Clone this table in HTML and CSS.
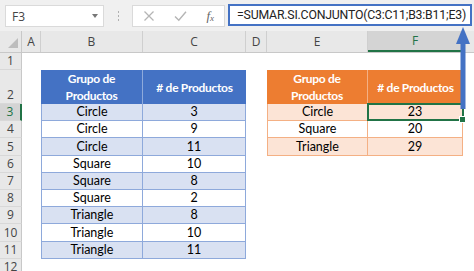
FILE: index.html
```html
<!DOCTYPE html>
<html>
<head>
<meta charset="utf-8">
<link rel="stylesheet" href="styles.css">
</head>
<body>
<div class="app">
  <div class="fbar">
    <div class="namebox"><span>F3</span><span class="caret"></span></div>
    <div class="grip"><i></i><i></i><i></i></div>
    <div class="btns">
      <svg width="12" height="12" viewBox="0 0 12 12"><path d="M1.5 1.5 L10.5 10.5 M10.5 1.5 L1.5 10.5" stroke="#b5b5b5" stroke-width="1.3" fill="none"/></svg>
      <svg width="13" height="12" viewBox="0 0 13 12"><path d="M1 6.5 L4.8 10.2 L12 1.8" stroke="#b5b5b5" stroke-width="1.4" fill="none"/></svg>
      <span class="fx">f<sub>x</sub></span>
    </div>
    <div class="formula">=SUMAR.SI.CONJUNTO(C3:C11;B3:B11;E3)</div>
  </div>
  <div class="sheet">
    <div class="row hdr">
      <div class="corner"><span class="tri"></span></div>
      <div class="ch">A</div><div class="ch">B</div><div class="ch">C</div><div class="ch">D</div><div class="ch">E</div><div class="ch sel">F</div><div class="ch last"></div>
    </div>
    <div class="row r1">
      <div class="rh">1</div><div></div><div></div><div></div><div></div><div></div><div></div><div></div>
    </div>
    <div class="row r2">
      <div class="rh">2</div><div></div>
      <div class="bh b">Grupo de<br>Productos</div><div class="bh c"># de Productos</div>
      <div></div>
      <div class="oh e">Grupo de<br>Productos</div><div class="oh f"># de Productos</div><div></div>
    </div>
    <div class="row">
      <div class="rh selr">3</div><div></div>
      <div class="bb b alt">Circle</div><div class="bb c alt">3</div><div></div>
      <div class="ob e alt">Circle</div><div class="ob f alt active">23</div><div></div>
    </div>
    <div class="row">
      <div class="rh">4</div><div></div>
      <div class="bb b">Circle</div><div class="bb c">9</div><div></div>
      <div class="ob e">Square</div><div class="ob f">20</div><div></div>
    </div>
    <div class="row h18">
      <div class="rh">5</div><div></div>
      <div class="bb b alt">Circle</div><div class="bb c alt">11</div><div></div>
      <div class="ob e alt">Triangle</div><div class="ob f alt">29</div><div></div>
    </div>
    <div class="row">
      <div class="rh">6</div><div></div>
      <div class="bb b">Square</div><div class="bb c">10</div><div></div><div></div><div></div><div></div>
    </div>
    <div class="row">
      <div class="rh">7</div><div></div>
      <div class="bb b alt">Square</div><div class="bb c alt">8</div><div></div><div></div><div></div><div></div>
    </div>
    <div class="row">
      <div class="rh">8</div><div></div>
      <div class="bb b">Square</div><div class="bb c">2</div><div></div><div></div><div></div><div></div>
    </div>
    <div class="row">
      <div class="rh">9</div><div></div>
      <div class="bb b alt">Triangle</div><div class="bb c alt">8</div><div></div><div></div><div></div><div></div>
    </div>
    <div class="row h18">
      <div class="rh">10</div><div></div>
      <div class="bb b">Triangle</div><div class="bb c">10</div><div></div><div></div><div></div><div></div>
    </div>
    <div class="row">
      <div class="rh">11</div><div></div>
      <div class="bb b alt">Triangle</div><div class="bb c alt">11</div><div></div><div></div><div></div><div></div>
    </div>
    <div class="row">
      <div class="rh">12</div><div></div><div></div><div></div><div></div><div></div><div></div><div></div>
    </div>
  </div>
  <svg class="arrow" width="20" height="86" viewBox="0 0 20 86">
    <rect x="4.5" y="14" width="5" height="68" fill="#4472c4"/>
    <polygon points="7,0 0,17 14,17" fill="#4472c4"/>
  </svg>
</div>
</body>
</html>
```
FILE: styles.css
```css
* { box-sizing: border-box; margin: 0; padding: 0; }
body { margin: 0; width: 474px; height: 271px; overflow: hidden; background: #fff; font-family: "Open Sans", "Noto Sans", sans-serif; }
.app { position: relative; width: 474px; height: 271px; background: #fff; }

.fbar { height: 31px; background: #f0f0f0; display: flex; align-items: flex-start; padding: 4px 2px 0 5px; }
.namebox { margin-top: 1px; width: 99px; height: 22px; background: #fff; border: 1px solid #dadada; display: flex; align-items: center; justify-content: space-between; padding: 0 5px 0 6px; font-size: 12px; color: #444; }
.caret { width: 0; height: 0; border-left: 3px solid transparent; border-right: 3px solid transparent; border-top: 4px solid #777; }
.grip { width: 28px; height: 23px; display: flex; flex-direction: column; align-items: center; justify-content: center; gap: 2px; }
.grip i { display: block; width: 1px; height: 2px; background: #b0b0b0; }
.btns { margin-top: 1px; width: 93px; height: 22px; background: #fff; border: 1px solid #dadada; display: flex; align-items: center; justify-content: space-between; padding: 0 10px 0 10px; }
.fx { font-family: "Liberation Serif", serif; font-style: italic; font-size: 13px; color: #666; line-height: 1; }
.fx sub { font-size: 9px; vertical-align: -1px; }
.formula { margin-left: 3px; width: 244px; height: 22px; border: 2px solid #4472c4; background: #fff; font-family: Roboto, sans-serif; font-size: 12.3px; letter-spacing: -0.2px; color: #222; display: flex; align-items: center; padding-left: 7px; white-space: nowrap; overflow: hidden; }

.sheet { display: flex; flex-direction: column; }
.row { display: grid; grid-template-columns: 22px 19px 102px 103px 21px 101px 95px 11px; height: 17px; }
.row.h18 { height: 18px; }
.row.r1 { height: 17px; }
.row.r2 { height: 34px; }
.row.hdr { height: 22px; background: #e8e8e8; border-bottom: 1px solid #c8c8c8; }

.corner { position: relative; border-right: 1px solid #c8c8c8; }
.tri { position: absolute; right: 3px; bottom: 4px; width: 0; height: 0; border-left: 10px solid transparent; border-bottom: 10px solid #bdbdbd; }
.ch { border-right: 1px solid #cfcfcf; display: flex; align-items: center; justify-content: center; font-size: 12px; color: #444; }
.ch.sel { background: #d4d4d4; border-bottom: 2px solid #217346; color: #217346; }
.ch.last { border-right: none; }

.rh { background: #e8e8e8; border-right: 1px solid #c8c8c8; border-bottom: 1px solid #d8d8d8; display: flex; align-items: center; justify-content: center; font-size: 12px; color: #444; line-height: 16px; }
.row.r2 .rh { align-items: flex-end; padding-bottom: 0; }
.rh.selr { background: #d4d4d4; color: #217346; border-right: 2px solid #217346; }

.bh, .oh { color: #fff; font-family: Lato, "Liberation Sans", sans-serif; font-weight: bold; font-size: 12px; letter-spacing: -0.3px; line-height: 17px; display: flex; align-items: center; justify-content: center; text-align: center; white-space: nowrap; }
.bh { background: #4472c4; }
.bh.b { border-right: 1px solid #8eaadb; }
.oh { background: #ed7d31; }
.oh.e { border-right: 1px solid #f4b084; }

.bb, .ob { font-family: Lato, "Liberation Sans", sans-serif; font-size: 12.5px; color: #000; display: flex; align-items: center; justify-content: center; line-height: 16px; background: #fff; }
.bb { border-bottom: 1px solid #8ea9db; }
.bb.b { border-left: 1px solid #8ea9db; border-right: 1px solid #8ea9db; }
.bb.c { border-right: 1px solid #8ea9db; }
.bb.alt { background: #d9e1f2; }
.ob { border-bottom: 1px solid #f4b084; }
.ob.e { border-left: 1px solid #f4b084; border-right: 1px solid #f4b084; }
.ob.f { border-right: 1px solid #f4b084; }
.ob.alt { background: #fce4d6; }
.active { position: relative; }
.active::after { content: ""; position: absolute; left: -1px; top: -1px; right: -2px; bottom: -1px; border: 2px solid #217346; }
.active::before { content: ""; position: absolute; right: -4px; bottom: -3px; width: 5px; height: 5px; background: #217346; border: 1px solid #fff; z-index: 2; }

.arrow { position: absolute; left: 456px; top: 27px; }
```
